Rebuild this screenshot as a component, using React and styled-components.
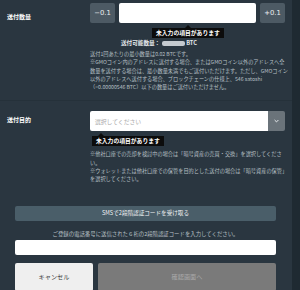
import styled, { createGlobalStyle } from "styled-components";

const GlobalStyle = createGlobalStyle`
  html, body {
    margin: 0;
    padding: 0;
    background: #2a3640;
  }
  body {
    font-family: "Noto Sans CJK JP", "Noto Sans", sans-serif;
    -webkit-font-smoothing: antialiased;
  }
`;

const Page = styled.div`
  display: flex;
  width: 300px;
  height: 290px;
  overflow: hidden;
  background: #2a3640;
`;

const Main = styled.div`
  flex: 1;
  display: flex;
  flex-direction: column;
`;

const Strip = styled.div`
  width: 8px;
  background: #1f2a32;
`;

const Section = styled.div`
  display: grid;
  grid-template-columns: 90px 195px;
  padding: ${(p) => p.$pad || "3px 0 0"};
  border-bottom: ${(p) => (p.$line ? "1px solid #25313a" : "none")};
`;

const Label = styled.div`
  padding: ${(p) => p.$top || "10px"} 0 0 7px;
  font-size: 6px;
  font-weight: 700;
  color: #ffffff;
  line-height: 8px;
`;

const Field = styled.div`
  display: flex;
  flex-direction: column;
`;

const StepperRow = styled.div`
  display: flex;
  height: 20px;
  gap: 4px;
`;

const StepBtn = styled.div`
  width: 25px;
  display: flex;
  align-items: center;
  justify-content: center;
  background: #4d5a64;
  border-radius: 2px;
  color: #e9edf0;
  font-size: 6.8px;
  font-family: "DejaVu Sans", sans-serif;
`;

const TextInput = styled.div`
  flex: 1;
  background: #ffffff;
  border-radius: 2px;
  height: ${(p) => p.$h || "auto"};
`;

const Tooltip = styled.div`
  position: relative;
  align-self: flex-start;
  margin: ${(p) => p.$margin};
  height: 10px;
  padding: 0 4px;
  background: #0c0c0c;
  color: #ffffff;
  font-size: 5.8px;
  font-weight: 700;
  line-height: 10px;
  white-space: nowrap;

  &::before {
    content: "";
    position: absolute;
    top: -3px;
    left: ${(p) => p.$arrow};
    border-left: 3px solid transparent;
    border-right: 3px solid transparent;
    border-bottom: 3px solid #0c0c0c;
  }
`;

const Available = styled.div`
  display: flex;
  align-items: center;
  margin: 1px 0 0 31px;
  font-size: 5.6px;
  font-weight: 700;
  color: #e6eaed;
  line-height: 8px;
`;

const Masked = styled.span`
  display: inline-block;
  width: 23px;
  height: 5px;
  margin: 0 1px 0 2px;
  background: #c5cacf;
  border-radius: 2px;
  filter: blur(0.6px);
`;

const Notes = styled.div`
  margin: ${(p) => p.$margin};
  font-size: 5.2px;
  line-height: 8.3px;
  color: #b8c0c6;
  white-space: nowrap;
`;

const Select = styled.div`
  display: flex;
  height: 20px;
  margin-top: 4px;
  border-radius: 2px;
  overflow: hidden;
`;

const SelectBox = styled.div`
  flex: 1;
  display: flex;
  align-items: center;
  padding-left: 5px;
  background: #ffffff;
  color: #a7a7a7;
  font-size: 5.8px;
`;

const SelectArrow = styled.div`
  width: 17px;
  display: flex;
  align-items: center;
  justify-content: center;
  background: #6a737a;
`;

const Bottom = styled.div`
  display: flex;
  flex-direction: column;
  padding: 22px 0 0 15px;
  width: 261px;
`;

const SmsButton = styled.div`
  height: 15px;
  display: flex;
  align-items: center;
  justify-content: center;
  background: #4a5e69;
  border-radius: 2px;
  color: #f2f4f5;
  font-size: 5.6px;
`;

const Hint = styled.div`
  margin-top: 9px;
  text-align: center;
  font-size: 5.4px;
  line-height: 8px;
  color: #b8c0c6;
`;

const CodeInput = styled(TextInput)`
  flex: none;
  margin-top: 2px;
`;

const Actions = styled.div`
  display: flex;
  gap: 5px;
  margin-top: 8px;
`;

const ActionButton = styled.div`
  width: ${(p) => p.$w || "auto"};
  flex: ${(p) => (p.$w ? "none" : "1")};
  height: 28px;
  display: flex;
  align-items: center;
  justify-content: center;
  border-radius: 2px;
  font-size: 6.2px;
  background: ${(p) => (p.$primary ? "#7a7a7a" : "#efefef")};
  color: ${(p) => (p.$primary ? "#a9a9a9" : "#3a3a3a")};
`;

export default function App() {
  return (
    <>
      <GlobalStyle />
      <Page>
        <Main>
          <Section $line $pad="3px 0 9px">
            <Label>送付数量</Label>
            <Field>
              <StepperRow>
                <StepBtn>−0.1</StepBtn>
                <TextInput />
                <StepBtn>+0.1</StepBtn>
              </StepperRow>
              <Tooltip $margin="5px 0 0 62px" $arrow="33px">
                未入力の項目があります
              </Tooltip>
              <Available>
                送付可能数量：<Masked />BTC
              </Available>
              <Notes $margin="3px 0 0 0">
                送付1回あたりの最小数量は0.02 BTCです。
                <br />
                ※GMOコイン内のアドレスに送付する場合、またはGMOコイン以外のアドレスへ全
                <br />
                数量を送付する場合は、最小数量未満でもご送付いただけます。ただし、GMOコイン
                <br />
                以外のアドレスへ送付する場合、ブロックチェーンの仕様上、546 satoshi
                <br />
                （=0.00000546 BTC）以下の数量はご送付いただけません。
              </Notes>
            </Field>
          </Section>
          <Section $pad="6px 0 0">
            <Label $top="9px">送付目的</Label>
            <Field>
              <Select>
                <SelectBox>選択してください</SelectBox>
                <SelectArrow>
                  <svg width="5" height="4" viewBox="0 0 5 4">
                    <path d="M0.6 1 L2.5 2.9 L4.4 1" fill="none" stroke="#e8ecef" strokeWidth="1" />
                  </svg>
                </SelectArrow>
              </Select>
              <Tooltip $margin="5px 0 0 2px" $arrow="6px">
                未入力の項目があります
              </Tooltip>
              <Notes $margin="4px 0 0 0">
                ※他社口座での売却を検討中の場合は「暗号資産の売買・交換」を選択してくださ
                <br />
                い。
                <br />
                ※ウォレットまたは他社口座での保管を目的とした送付の場合は「暗号資産の保管」
                <br />
                を選択してください。
              </Notes>
            </Field>
          </Section>
          <Bottom>
            <SmsButton>SMSで2段階認証コードを受け取る</SmsButton>
            <Hint>ご登録の電話番号に送信された６桁の2段階認証コードを入力してください。</Hint>
            <CodeInput $h="15px" />
            <Actions>
              <ActionButton $w="78px">キャンセル</ActionButton>
              <ActionButton $primary>確認画面へ</ActionButton>
            </Actions>
          </Bottom>
        </Main>
        <Strip />
      </Page>
    </>
  );
}
